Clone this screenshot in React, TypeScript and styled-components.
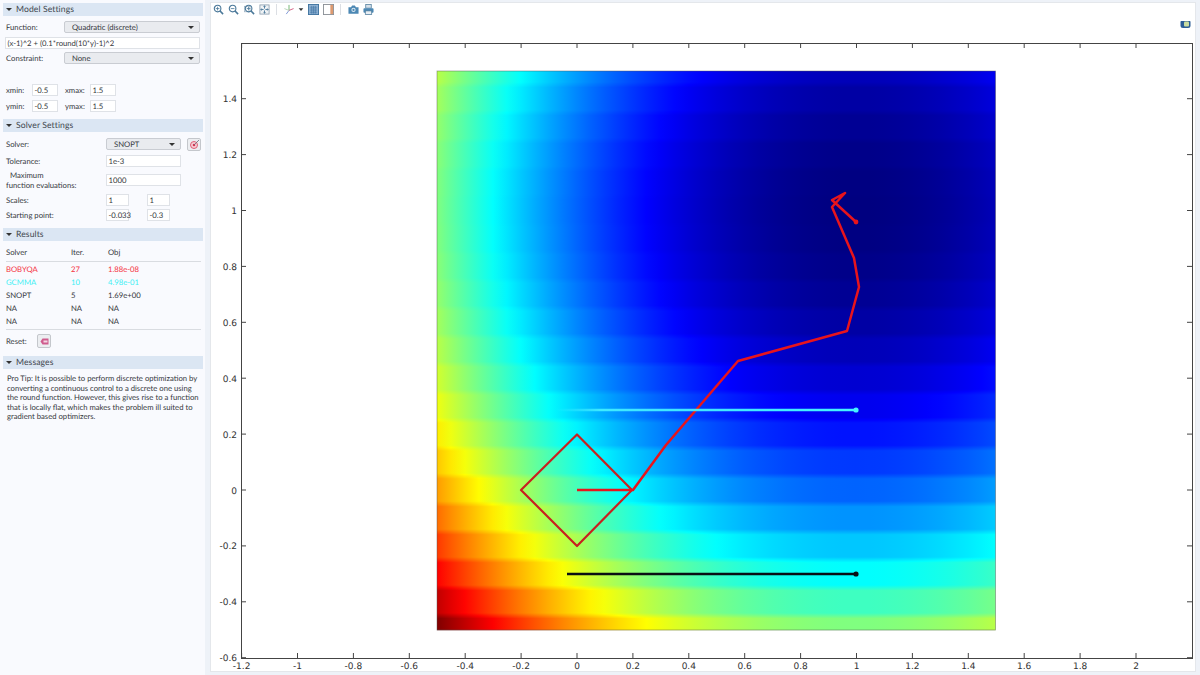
import React from "react";
import styled, { createGlobalStyle } from "styled-components";

const GlobalStyle = createGlobalStyle`
  html, body {
    margin: 0;
    padding: 0;
    background: #eef2f8;
    font-family: Lato, Roboto, sans-serif;
    text-rendering: geometricPrecision;
  }
`;

const Page = styled.div`
  width: 1200px;
  height: 675px;
  display: flex;
  overflow: hidden;
  background: #eef2f8;
`;

const Sidebar = styled.aside`
  width: 205px;
  height: 100%;
  box-sizing: border-box;
  padding: 3px 2px 0 3px;
  background: #f9fafe;
  font-size: 7.7px;
  color: #34373c;
  flex-shrink: 0;
`;

const SectionHeader = styled.div<{ $top?: number }>`
  height: 13px;
  box-sizing: border-box;
  margin-top: ${({ $top }) => $top ?? 0}px;
  padding: 0 0 1px 3px;
  display: flex;
  align-items: center;
  gap: 4px;
  background: #dbe6f3;
  font-size: 8.6px;
  letter-spacing: 0.1px;
  color: #41464e;
`;

const Caret = styled.span`
  width: 0;
  height: 0;
  border-left: 3px solid transparent;
  border-right: 3px solid transparent;
  border-top: 3px solid #333;
`;

const Row = styled.div<{ $top: number; $height?: number }>`
  display: flex;
  align-items: center;
  height: ${({ $height }) => $height ?? 12}px;
  margin-top: ${({ $top }) => $top}px;
  padding-left: 3px;
`;

const Label = styled.span<{ $width: number; $gap?: number }>`
  width: ${({ $width }) => $width}px;
  margin-left: ${({ $gap }) => $gap ?? 0}px;
  flex-shrink: 0;
  line-height: 10px;
`;

const IndentedLine = styled.span`
  padding-left: 4px;
`;

const Select = styled.div<{ $width: number }>`
  width: ${({ $width }) => $width}px;
  height: 12px;
  box-sizing: border-box;
  padding: 0 5px 0 7px;
  display: flex;
  align-items: center;
  justify-content: space-between;
  background: #e9ebef;
  border: 1px solid #c9ccd2;
  border-radius: 2px;
`;

const Input = styled.div<{ $width: number; $gap?: number }>`
  width: ${({ $width }) => $width}px;
  height: 12px;
  margin-left: ${({ $gap }) => $gap ?? 0}px;
  box-sizing: border-box;
  padding-left: 1.5px;
  display: flex;
  align-items: center;
  background: #fff;
  border: 1px solid #dfe2e7;
  white-space: nowrap;
`;

const SquareButton = styled.div<{ $height: number; $gap?: number }>`
  width: 14px;
  height: ${({ $height }) => $height}px;
  margin-left: ${({ $gap }) => $gap ?? 0}px;
  box-sizing: border-box;
  display: flex;
  align-items: center;
  justify-content: center;
  background: #eceef1;
  border: 1px solid #c4c7cc;
  border-radius: 2px;
`;

const TableRow = styled.div<{ $color?: string; $top?: number }>`
  display: grid;
  grid-template-columns: 65px 37px 1fr;
  align-items: center;
  height: 13px;
  margin-top: ${({ $top }) => $top ?? 0}px;
  padding-left: 3px;
  color: ${({ $color }) => $color ?? "#34373c"};
`;

const TableRule = styled.div<{ $top: number }>`
  height: 1px;
  margin: ${({ $top }) => $top}px 2px 0 3px;
  background: #d9dce1;
`;

const Message = styled.p`
  margin: 5px 0 0;
  padding-left: 4px;
  line-height: 9.5px;
  white-space: nowrap;
`;

const PlotPane = styled.main`
  width: 986px;
  height: 670px;
  margin: 2px 0 0 5px;
  box-sizing: border-box;
  display: flex;
  flex-direction: column;
  background: #fff;
  border: 1px solid #e4e7eb;
`;

const Toolbar = styled.div`
  height: 18px;
  flex-shrink: 0;
  box-sizing: border-box;
  padding: 0 0 6px 2px;
  display: flex;
  align-items: center;
`;

const ToolIcon = styled.svg<{ $gap?: number; $width?: number }>`
  width: ${({ $width }) => $width ?? 11}px;
  height: 11px;
  margin-left: ${({ $gap }) => $gap ?? 4}px;
  flex-shrink: 0;
`;

const ToolDivider = styled.span<{ $gap: number }>`
  width: 1px;
  height: 11px;
  margin-left: ${({ $gap }) => $gap}px;
  background: #dcdfe4;
`;

const ChartSvg = styled.svg`
  display: block;
  width: 984px;
  height: 650px;
`;

const X0 = 577;
const Y0 = 490;
const SCALE = 279.5;

const px = (v: number) => X0 + SCALE * v;
const py = (v: number) => Y0 - SCALE * v;

const clamp = (v: number) => Math.max(0, Math.min(1, v));

const jet = (t: number) => {
  const r = clamp(1.5 - Math.abs(4 * t - 3));
  const g = clamp(1.5 - Math.abs(4 * t - 2));
  const b = clamp(1.5 - Math.abs(4 * t - 1));
  return `rgb(${Math.round(r * 255)},${Math.round(g * 255)},${Math.round(b * 255)})`;
};

// y part of the objective, softened across the rounding steps like the interpolated plot
const bandValue = (row: number) => {
  const y = (Y0 - row) / SCALE;
  const tenY = y * 10;
  const k = Math.floor(tenY + 0.5);
  const frac = tenY + 0.5 - k;
  const soft = 0.1;
  const c = (n: number) => (0.1 * n - 1) ** 2;
  if (frac < soft) return c(k) + ((c(k - 1) - c(k)) * (soft - frac)) / (2 * soft);
  if (frac > 1 - soft) return c(k) + ((c(k + 1) - c(k)) * (frac - 1 + soft)) / (2 * soft);
  return c(k);
};

const heatRows = Array.from({ length: 559 }, (_, i) => {
  const row = 71 + i;
  return { row, c: bandValue(row + 0.5).toFixed(3) };
});
const heatBands = Array.from(new Set(heatRows.map((r) => r.c)));
const heatStops = Array.from({ length: 41 }, (_, i) => i / 40);

const HeatMap = () => (
  <g>
    <defs>
      {heatBands.map((c) => (
        <linearGradient key={c} id={`band-${c}`}>
          {heatStops.map((s) => {
            const x = -0.5 + 2 * s;
            return <stop key={s} offset={s} stopColor={jet(((x - 1) ** 2 + Number(c)) / 4.5)} />;
          })}
        </linearGradient>
      ))}
      <linearGradient id="cyan-fade" gradientUnits="userSpaceOnUse" x1="556" y1="0" x2="856" y2="0">
        <stop offset="0" stopColor="#46f2ff" stopOpacity="0" />
        <stop offset="0.15" stopColor="#46f2ff" stopOpacity="0.9" />
        <stop offset="1" stopColor="#46f2ff" />
      </linearGradient>
    </defs>
    {heatRows.map(({ row, c }) => (
      <rect key={row} x={437} y={row} width={558.5} height={1.2} fill={`url(#band-${c})`} />
    ))}
    <rect x={437} y={71} width={558.5} height={559} fill="none" stroke="#555" strokeOpacity={0.55} strokeWidth={0.8} />
  </g>
);

const xTicks = Array.from({ length: 17 }, (_, i) => Math.round((-1.2 + i * 0.2) * 10) / 10);
const yTicks = Array.from({ length: 11 }, (_, i) => Math.round((-0.6 + i * 0.2) * 10) / 10);

const Axes = () => (
  <g stroke="#444" strokeWidth={1} fontFamily="'DejaVu Sans', sans-serif" fontSize={9}>
    <rect x={241.5} y={43.5} width={951} height={615} fill="none" />
    {xTicks.map((v) => (
      <g key={v}>
        <line x1={px(v)} x2={px(v)} y1={658} y2={653} />
        <line x1={px(v)} x2={px(v)} y1={43} y2={48} />
        <text x={px(v)} y={669} textAnchor="middle" fill="#333" stroke="none">
          {v}
        </text>
      </g>
    ))}
    {yTicks.map((v) => (
      <g key={v}>
        <line x1={241} x2={246} y1={py(v)} y2={py(v)} />
        <line x1={1192} x2={1187} y1={py(v)} y2={py(v)} />
        <text x={237} y={py(v) + 3.5} textAnchor="end" fill="#333" stroke="none">
          {v}
        </text>
      </g>
    ))}
  </g>
);

const Trajectories = () => (
  <g fill="none" strokeLinejoin="round">
    <polygon points="577,434.5 632,490 577,546 521,490" stroke="#c8201f" strokeWidth={2.2} />
    <polyline
      points="577,490 633,490 666,445 738,361 847,331 859,287 854,258 832,207 845,193 832,200 856,222"
      stroke="#e8141c"
      strokeWidth={2.5}
    />
    <circle cx={856} cy={222} r={2.4} fill="#e8141c" />
    <line x1={556} x2={856} y1={410} y2={410.01} stroke="url(#cyan-fade)" strokeWidth={2.6} />
    <circle cx={856} cy={410} r={2.6} fill="#46f2ff" />
    <line x1={567} x2={856} y1={574} y2={574} stroke="#0a0f14" strokeWidth={2.6} />
    <circle cx={856} cy={574} r={2.6} fill="#0a0f14" />
  </g>
);

const BLUE = "#4a7899";

const ZoomGlyph = ({ mark, gap }: { mark: "in" | "out" | "box"; gap?: number }) => (
  <ToolIcon viewBox="0 0 12 12" $gap={gap} fill="none" stroke={BLUE} strokeWidth={1.2}>
    {mark === "box" && <rect x={0.5} y={2.5} width={6} height={6} stroke="#9db2c3" strokeWidth={0.8} />}
    <circle cx={5} cy={5} r={3.6} />
    <line x1={7.7} y1={7.7} x2={11} y2={11} strokeWidth={1.7} />
    <line x1={3} y1={5} x2={7} y2={5} strokeWidth={0.9} />
    {mark !== "out" && <line x1={5} y1={3} x2={5} y2={7} strokeWidth={0.9} />}
  </ToolIcon>
);

const ToolbarIcons = () => (
  <Toolbar>
    <ZoomGlyph mark="in" gap={0} />
    <ZoomGlyph mark="out" />
    <ZoomGlyph mark="box" gap={5} />
    <ToolIcon viewBox="0 0 12 12" fill="none" stroke="#8a9dac" strokeWidth={0.9}>
      <rect x={1} y={1} width={10} height={10} fill="#f0f3f6" />
      <path d="M6 2v3M6 7v3M2 6h3M7 6h3" stroke={BLUE} strokeWidth={1} />
      <path d="M4.8 3 6 1.8 7.2 3M4.8 9 6 10.2 7.2 9M3 4.8 1.8 6 3 7.2M9 4.8 10.2 6 9 7.2" stroke={BLUE} strokeWidth={0.8} />
    </ToolIcon>
    <ToolDivider $gap={6} />
    <ToolIcon viewBox="0 0 12 12" $gap={6} $width={12} fill="none" strokeWidth={1}>
      <line x1={6} y1={7} x2={6} y2={1} stroke="#6cb56c" />
      <line x1={6} y1={7} x2={11} y2={5} stroke="#d2587e" />
      <line x1={6} y1={7} x2={3} y2={11} stroke="#7890d6" />
      <line x1={6} y1={7} x2={1} y2={5} stroke="#b5d2b5" />
    </ToolIcon>
    <ToolIcon viewBox="0 0 6 12" $gap={3} $width={6}>
      <path d="M0.5 4.5h5L3 7.5z" fill="#333" />
    </ToolIcon>
    <ToolIcon viewBox="0 0 12 12" $gap={4} fill="none">
      <rect x={0.5} y={0.5} width={11} height={11} fill="#8fb2d4" stroke="#3d719f" />
      <path d="M2 3.5h8M2 5.5h8M2 7.5h8M2 9.5h8M4 2v8.5M6 2v8.5M8 2v8.5" stroke="#3a6f9f" strokeWidth={0.6} />
    </ToolIcon>
    <ToolIcon viewBox="0 0 12 12" fill="none">
      <rect x={0.5} y={0.5} width={11} height={11} fill="#fff" stroke="#8a8f96" />
      <rect x={8} y={1} width={3} height={10} fill="#dd9a70" />
    </ToolIcon>
    <ToolDivider $gap={6} />
    <ToolIcon viewBox="0 0 12 12" $gap={7}>
      <path d="M0.5 3.5h2.8L4.5 1.5h3l1.2 2h2.8v7h-11z" fill="#4c88b4" />
      <circle cx={6} cy={6.5} r={2.3} fill="#dbe8f2" />
      <circle cx={6} cy={6.5} r={1.2} fill="#4c88b4" />
    </ToolIcon>
    <ToolIcon viewBox="0 0 12 12">
      <rect x={3} y={0.5} width={6} height={4} fill="#d5e0ea" stroke="#4a7899" strokeWidth={0.8} />
      <rect x={0.5} y={4.5} width={11} height={5} rx={1} fill="#4c88b4" />
      <rect x={2.5} y={7.5} width={7} height={4} fill="#e8eef4" stroke="#4a7899" strokeWidth={0.8} />
    </ToolIcon>
  </Toolbar>
);

const ResetGlyph = () => (
  <svg width="9" height="7" viewBox="0 0 9 7">
    <path d="M2.5 0.5H8.5V6.5H2.5L0.5 3.5z" fill="#cf5c8e" />
    <rect x={3.5} y={2.5} width={4} height={2} fill="#f3d5e2" />
  </svg>
);

const TargetGlyph = () => (
  <svg width="11" height="11" viewBox="0 0 11 11" fill="none">
    <circle cx={5} cy={6} r={3.5} fill="#f6d0d8" stroke="#dc5068" strokeWidth={0.9} />
    <circle cx={5} cy={6} r={1.3} fill="#d8344f" />
    <path d="M5 6 10 1" stroke="#6a7078" strokeWidth={0.8} />
  </svg>
);

const ViewGlyph = () => (
  <g>
    <rect x={1180.5} y={20} width={10} height={8} rx={2.5} fill="#2b5c96" />
    <rect x={1184} y={21.5} width={5} height={5} rx={1} fill="#c9dca0" />
  </g>
);

const results = [
  { solver: "BOBYQA", iter: "27", obj: "1.88e-08", color: "#f5333f" },
  { solver: "GCMMA", iter: "10", obj: "4.98e-01", color: "#3ceff4" },
  { solver: "SNOPT", iter: "5", obj: "1.69e+00" },
  { solver: "NA", iter: "NA", obj: "NA" },
  { solver: "NA", iter: "NA", obj: "NA" },
];

const App: React.FC = () => (
  <Page>
    <GlobalStyle />
    <Sidebar>
      <SectionHeader>
        <Caret />
        Model Settings
      </SectionHeader>
      <Row $top={5}>
        <Label $width={58}>Function:</Label>
        <Select $width={136}>
          Quadratic (discrete)
          <Caret />
        </Select>
      </Row>
      <Row $top={4}>
        <Input $width={195} $gap={-1}>
          (x-1)^2 + (0.1*round(10*y)-1)^2
        </Input>
      </Row>
      <Row $top={3}>
        <Label $width={58}>Constraint:</Label>
        <Select $width={136}>
          None
          <Caret />
        </Select>
      </Row>
      <Row $top={20}>
        <Label $width={26}>xmin:</Label>
        <Input $width={26}>-0.5</Input>
        <Label $width={25} $gap={7}>
          xmax:
        </Label>
        <Input $width={26}>1.5</Input>
      </Row>
      <Row $top={4}>
        <Label $width={26}>ymin:</Label>
        <Input $width={26}>-0.5</Input>
        <Label $width={25} $gap={7}>
          ymax:
        </Label>
        <Input $width={26}>1.5</Input>
      </Row>

      <SectionHeader $top={7}>
        <Caret />
        Solver Settings
      </SectionHeader>
      <Row $top={6}>
        <Label $width={100}>Solver:</Label>
        <Select $width={75}>
          SNOPT
          <Caret />
        </Select>
        <SquareButton $height={13} $gap={6}>
          <TargetGlyph />
        </SquareButton>
      </Row>
      <Row $top={5}>
        <Label $width={100}>Tolerance:</Label>
        <Input $width={75}>1e-3</Input>
      </Row>
      <Row $top={3} $height={20}>
        <Label $width={100}>
          <IndentedLine>Maximum</IndentedLine>
          <br />
          function evaluations:
        </Label>
        <Input $width={75}>1000</Input>
      </Row>
      <Row $top={4}>
        <Label $width={100}>Scales:</Label>
        <Input $width={23}>1</Input>
        <Input $width={23} $gap={18}>
          1
        </Input>
      </Row>
      <Row $top={3}>
        <Label $width={100}>Starting point:</Label>
        <Input $width={23}>-0.033</Input>
        <Input $width={23} $gap={18}>
          -0.3
        </Input>
      </Row>

      <SectionHeader $top={7}>
        <Caret />
        Results
      </SectionHeader>
      <TableRow $top={4}>
        <span>Solver</span>
        <span>Iter.</span>
        <span>Obj</span>
      </TableRow>
      <TableRule $top={3} />
      {results.map((r, i) => (
        <TableRow key={i} $color={r.color}>
          <span>{r.solver}</span>
          <span>{r.iter}</span>
          <span>{r.obj}</span>
        </TableRow>
      ))}
      <TableRule $top={2} />
      <Row $top={4} $height={14}>
        <Label $width={31}>Reset:</Label>
        <SquareButton $height={14}>
          <ResetGlyph />
        </SquareButton>
      </Row>

      <SectionHeader $top={8}>
        <Caret />
        Messages
      </SectionHeader>
      <Message>
        Pro Tip: It is possible to perform discrete optimization by
        <br />
        converting a continuous control to a discrete one using
        <br />
        the round function. However, this gives rise to a function
        <br />
        that is locally flat, which makes the problem ill suited to
        <br />
        gradient based optimizers.
      </Message>
    </Sidebar>
    <PlotPane>
      <ToolbarIcons />
      <ChartSvg viewBox="211 21 984 650">
        <HeatMap />
        <Axes />
        <Trajectories />
        <ViewGlyph />
      </ChartSvg>
    </PlotPane>
  </Page>
);

export default App;
